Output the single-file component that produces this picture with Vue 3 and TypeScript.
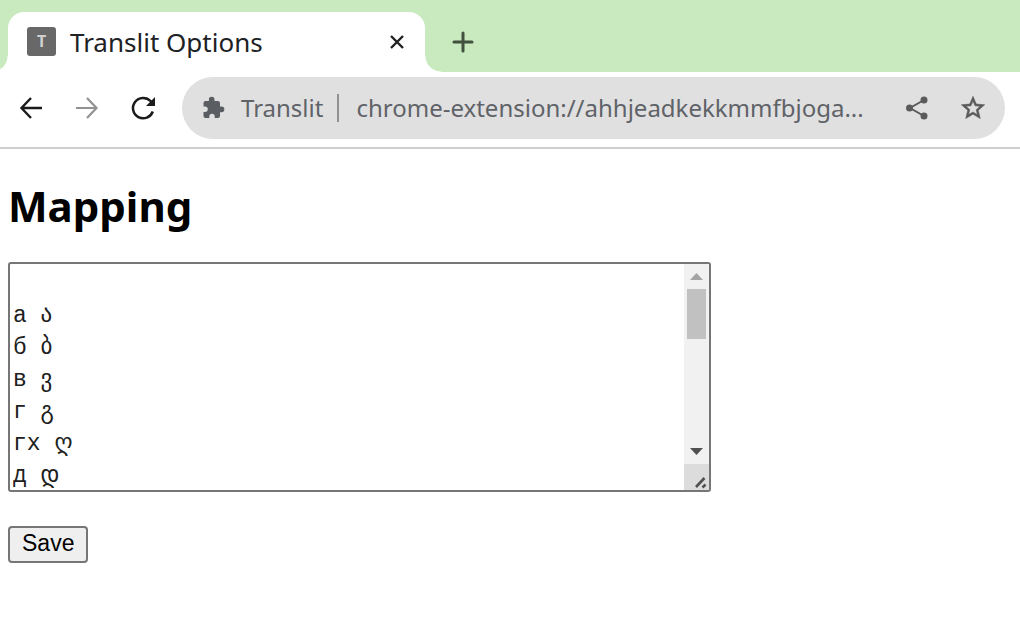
<script setup lang="ts">
import { computed, onMounted, ref } from 'vue'

const pairs: [string, string][] = [
  ['а', 'ა'],
  ['б', 'ბ'],
  ['в', 'ვ'],
  ['г', 'გ'],
  ['гх', 'ღ'],
  ['д', 'დ'],
  ['е', 'ე'],
  ['ж', 'ჟ'],
  ['з', 'ზ'],
  ['и', 'ი'],
  ['к', 'კ'],
  ['л', 'ლ'],
  ['м', 'მ'],
  ['н', 'ნ'],
  ['о', 'ო'],
  ['п', 'პ'],
  ['р', 'რ'],
  ['с', 'ს'],
  ['т', 'ტ'],
  ['у', 'უ'],
]

const mapping = ref('\n' + pairs.map((p) => p.join(' ')).join('\n'))

const area = ref<HTMLTextAreaElement | null>(null)
const shown = ref(1)
const offset = ref(0)

function measure() {
  const el = area.value
  if (!el) return
  shown.value = el.clientHeight / el.scrollHeight
  offset.value = el.scrollTop / el.scrollHeight
}

function step(lines: number) {
  area.value?.scrollBy({ top: lines * 32 })
}

const thumb = computed(() => ({
  height: `${shown.value * 100}%`,
  marginTop: `${offset.value * 150}px`,
}))

onMounted(measure)
</script>

<template>
  <div class="browser">
    <div class="tabs">
      <div class="tab">
        <span class="favicon">T</span>
        <span class="title">Translit Options</span>
        <button class="icon" aria-label="Close tab">
          <svg width="16" height="16" viewBox="0 0 16 16"><path d="M2 2l12 12M14 2L2 14" stroke="#202020" stroke-width="2.4" fill="none" /></svg>
        </button>
      </div>
      <button class="icon add" aria-label="New tab">
        <svg width="22" height="22" viewBox="0 0 22 22"><path d="M11 2v18M2 11h18" stroke="#41503f" stroke-width="3" stroke-linecap="round" fill="none" /></svg>
      </button>
    </div>

    <nav class="toolbar">
      <button class="icon" aria-label="Back">
        <svg width="26" height="24" viewBox="0 0 26 24"><path d="M24 12H4M13 2L3.500 12l9.500 10" stroke="#1b1b1b" stroke-width="2.400" fill="none" /></svg>
      </button>
      <button class="icon" aria-label="Forward">
        <svg width="26" height="24" viewBox="0 0 26 24"><path d="M2 12h20M13 2l9.500 10L13 22" stroke="#929292" stroke-width="2.200" fill="none" /></svg>
      </button>
      <button class="icon" aria-label="Reload">
        <svg width="26" height="26" viewBox="0 0 26 26"><path d="M22.800 16.500A10.200 10.200 0 1 1 20.500 6l2 2" stroke="#1b1b1b" stroke-width="2.500" fill="none" /><path d="M25 2v9h-9z" fill="#1b1b1b" /></svg>
      </button>
      <div class="omnibox">
        <svg class="puzzle" width="26" height="26" viewBox="0 0 26 26"><path d="M21.500 11.500H20V8c0-1.100-.9-2-2-2h-3.500V4.500a2.800 2.800 0 0 0-5.600 0V6H5.500c-1.100 0-2 .9-2 2v3.500H5a2.700 2.700 0 0 1 0 5.500H3.500v4c0 1.100.9 2 2 2h3.800v-1.500a2.700 2.700 0 0 1 5.400 0V23H18c1.100 0 2-.9 2-2v-3.800h1.500a2.800 2.800 0 0 0 0-5.700z" fill="#5a5e63" /></svg>
        <span class="origin">Translit</span>
        <span class="url">chrome-extension://ahhjeadkekkmmfbjoga...</span>
        <button class="icon" aria-label="Share">
          <svg width="24" height="26" viewBox="0 0 24 26"><path d="M19 5L5 13l14 8" stroke="#5a5a5a" stroke-width="2" fill="none" /><g fill="#5a5a5a"><circle cx="19" cy="5" r="3.500" /><circle cx="4.500" cy="13" r="3.500" /><circle cx="19" cy="21" r="3.500" /></g></svg>
        </button>
        <button class="icon" aria-label="Bookmark this page">
          <svg width="28" height="28" viewBox="0 0 24 24"><path d="M22 9.240l-7.190-.62L12 2 9.190 8.630 2 9.240l5.460 4.730L5.820 21 12 17.270 18.180 21l-1.630-7.030L22 9.240zM12 15.400l-3.760 2.270 1-4.280-3.320-2.880 4.380-.38L12 6.100l1.710 4.040 4.380.38-3.320 2.880 1 4.280L12 15.400z" fill="#5a5a5a" stroke="#5a5a5a" stroke-width=".5" /></svg>
        </button>
      </div>
    </nav>

    <main class="page">
      <h1><label for="mapping">Mapping</label></h1>
      <div class="field">
        <textarea id="mapping" ref="area" v-model="mapping" spellcheck="false" @scroll="measure" @input="measure"></textarea>
        <div class="scroll">
          <button class="icon arrow" type="button" aria-label="Scroll up" @click="step(-1)">
            <svg width="13" height="7" viewBox="0 0 13 7"><path d="M0 7L6.500 0 13 7z" fill="#a3a3a3" /></svg>
          </button>
          <div class="track"><div class="thumb" :style="thumb"></div></div>
          <button class="icon arrow" type="button" aria-label="Scroll down" @click="step(1)">
            <svg width="13" height="7" viewBox="0 0 13 7"><path d="M0 0h13L6.500 7z" fill="#505050" /></svg>
          </button>
          <svg class="grip" width="25" height="26" viewBox="0 0 25 26"><path d="M12 23L20.500 14M18.500 23.500l3-3" stroke="#505050" stroke-width="2.600" fill="none" /></svg>
        </div>
      </div>
      <button class="save" type="button">Save</button>
    </main>
  </div>
</template>

<style>
body {
  margin: 0;
  background: #fff;
}
</style>

<style scoped>
.browser {
  font-family: "Noto Sans", sans-serif;
  color: #202124;
}
.icon {
  display: flex;
  flex: none;
  padding: 0;
  border: 0;
  background: none;
}
.tabs {
  display: flex;
  align-items: stretch;
  height: 72px;
  box-sizing: border-box;
  padding: 12px 0 0 8px;
  background: #c9e9bf;
}
.tab {
  position: relative;
  display: flex;
  align-items: center;
  width: 417px;
  box-sizing: border-box;
  padding: 0 20px 1px 19px;
  border-radius: 16px 16px 0 0;
  background: #fff;
}
.tab::before,
.tab::after {
  content: "";
  position: absolute;
  bottom: 0;
  width: 16px;
  height: 16px;
}
.tab::before {
  right: 100%;
  background: radial-gradient(circle at 0 0, #c9e9bf 15px, #fff 16px);
}
.tab::after {
  left: 100%;
  background: radial-gradient(circle at 100% 0, #c9e9bf 15px, #fff 16px);
}
.favicon {
  width: 29px;
  height: 29px;
  border-radius: 3px;
  background: #686868;
  color: #d0d0d0;
  font: bold 16px/29px "Noto Sans", sans-serif;
  text-align: center;
}
.title {
  flex: 1;
  margin-left: 14px;
  font-size: 26px;
  line-height: 36px;
  white-space: nowrap;
}
.add {
  align-items: center;
  margin-left: 27px;
}
.toolbar {
  display: flex;
  align-items: center;
  gap: 30px;
  height: 77px;
  box-sizing: border-box;
  padding: 0 15px 3px 18px;
  border-bottom: 2px solid #cfcfcf;
}
.omnibox {
  display: flex;
  flex: 1;
  align-items: center;
  min-width: 0;
  height: 62px;
  margin-left: -4px;
  box-sizing: border-box;
  padding: 0 18px 1px;
  border-radius: 31px;
  background: #e0e0e0;
  color: #5f6368;
  font-size: 24px;
  line-height: 36px;
  white-space: nowrap;
}
.puzzle {
  flex: none;
}
.origin {
  margin-left: 15px;
  padding-right: 14px;
  border-right: 2px solid #909294;
  line-height: 28px;
}
.url {
  flex: 1;
  min-width: 0;
  margin-left: 17px;
  overflow: hidden;
}
.omnibox .icon + .icon {
  margin-left: 30px;
}
.page {
  display: flex;
  flex-direction: column;
  align-items: flex-start;
  padding: 27px 8px;
}
h1 {
  margin: 0;
  color: #000;
  font-size: 42px;
  line-height: 60px;
}
.field {
  display: flex;
  width: 703px;
  max-width: 100%;
  height: 230px;
  box-sizing: border-box;
  margin-top: 26px;
  border: 2px solid #767676;
  border-radius: 3px;
  background: #fff;
}
textarea {
  flex: 1;
  min-width: 0;
  margin: 0;
  padding: 4px 3px;
  border: 0;
  outline: 0;
  background: none;
  color: #202020;
  font: 23px/32px "Liberation Mono", "DejaVu Sans", monospace;
  overflow-y: auto;
  resize: none;
}
.scroll {
  display: flex;
  flex-direction: column;
  width: 25px;
  background: #f1f1f1;
}
.arrow {
  align-items: center;
  justify-content: center;
  height: 25px;
}
.track {
  flex: 1;
  min-height: 0;
  padding: 0 3px;
  overflow: hidden;
}
.thumb {
  background: #c1c1c1;
}
.grip {
  flex: none;
  background: #dcdcdc;
}
.save {
  height: 37px;
  margin-top: 34px;
  padding: 0 12px 4px;
  border: 2px solid #767676;
  border-radius: 4px;
  background: #efefef;
  color: #000;
  font: 23px/30px "Liberation Sans", Arial, sans-serif;
}
</style>
